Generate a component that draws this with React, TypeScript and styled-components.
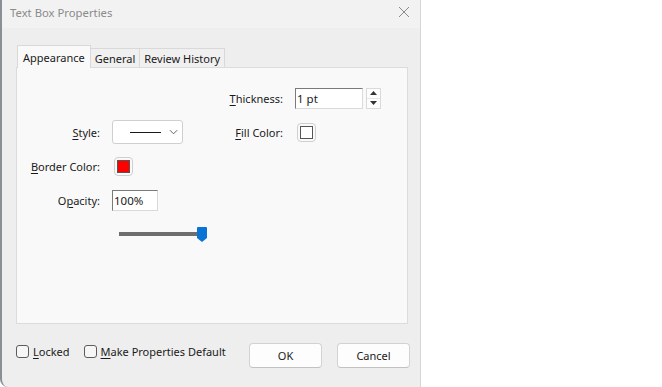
import React from "react";
import styled, { createGlobalStyle } from "styled-components";

const GlobalStyle = createGlobalStyle`
  html, body {
    margin: 0;
    padding: 0;
    background: #ffffff;
  }
  body {
    font-family: "Segoe UI", "Noto Sans", "Open Sans", sans-serif;
    font-size: 11px;
    color: #1a1a1a;
  }
`;

const Window = styled.div`
  width: 421px;
  height: 387px;
  background: #eeeeee;
  border-right: 1px solid #d6d6d6;
  border-left: 2px solid #8a8f96;
  border-bottom-left-radius: 8px;
  box-sizing: border-box;
  display: flex;
  flex-direction: column;
  overflow: hidden;
`;

const TitleBar = styled.div`
  height: 28px;
  background: #f2f2f2;
  display: flex;
  align-items: center;
  justify-content: space-between;
  padding: 0 4px 4px 8px;
  box-sizing: border-box;
  color: #8a8a8a;
  font-size: 11.3px;
`;

const CloseButton = styled.div`
  width: 24px;
  height: 24px;
  display: flex;
  align-items: center;
  justify-content: center;
`;

const Body = styled.div`
  flex: 1;
  display: flex;
  flex-direction: column;
  padding: 17px 12px 0 14px;
`;

const TabRow = styled.div`
  display: flex;
  align-items: flex-end;
  height: 22px;
  margin-left: 1px;
`;

const Tab = styled.div<{ $active?: boolean }>`
  height: ${p => (p.$active ? "23px" : "19px")};
  padding: 0 ${p => (p.$active ? "5px" : "4px")};
  display: flex;
  align-items: center;
  background: ${p => (p.$active ? "#f9f9f9" : "#f0f0f0")};
  border: 1px solid #d9d9d9;
  border-bottom: none;
  margin-left: ${p => (p.$active ? "0" : "-1px")};
  margin-bottom: ${p => (p.$active ? "-1px" : "0")};
  position: relative;
  z-index: ${p => (p.$active ? 2 : 1)};
  box-sizing: border-box;
  color: #1a1a1a;
`;

const Panel = styled.div`
  height: 257px;
  background: #f9f9f9;
  border: 1px solid #dcdcdc;
  box-sizing: border-box;
  padding-top: 13px;
  display: grid;
  grid-template-columns: 83px 71px 88px 1fr;
  grid-auto-rows: 34px;
  column-gap: 12px;
  align-items: center;
`;

const Label = styled.label<{ $col: number }>`
  grid-column: ${p => p.$col};
  text-align: right;
  white-space: nowrap;
  color: #1a1a1a;
`;

const Key = styled.span`
  text-decoration: underline;
  text-underline-offset: 2px;
`;

const Field = styled.div<{ $col: number }>`
  grid-column: ${p => p.$col};
  display: flex;
  align-items: center;
  gap: 3px;
`;

const TextInput = styled.div<{ $w: number }>`
  width: ${p => p.$w}px;
  height: 21px;
  box-sizing: border-box;
  background: #ffffff;
  border: 1px solid #dadada;
  border-top-color: #7a7a7a;
  border-left-color: #7a7a7a;
  padding: 0 1px;
  display: flex;
  align-items: center;
  font-size: 11.5px;
`;

const Spinner = styled.div`
  width: 15px;
  height: 21px;
  display: flex;
  flex-direction: column;
  border: 1px solid #dadada;
  box-sizing: border-box;
  background: #fdfdfd;
`;

const SpinHalf = styled.div`
  flex: 1;
  display: flex;
  align-items: center;
  justify-content: center;
  border-bottom: 1px solid #e6e6e6;
  &:last-child {
    border-bottom: none;
  }
`;

const Select = styled.div`
  width: 71px;
  height: 24px;
  box-sizing: border-box;
  background: #ffffff;
  border: 1px solid #cfcfcf;
  border-radius: 3px;
  display: flex;
  align-items: center;
  padding: 0 4px 0 17px;
  gap: 8px;
`;

const LineSample = styled.div`
  width: 34px;
  height: 1px;
  background: #1a1a1a;
`;

const Swatch = styled.div<{ $fill: string }>`
  width: 19px;
  height: 19px;
  box-sizing: border-box;
  border: 1px solid #cfcfcf;
  border-radius: 4px;
  background: #fafafa;
  display: flex;
  align-items: center;
  justify-content: center;
  margin-left: 2px;
  &::after {
    content: "";
    width: 13px;
    height: 13px;
    box-sizing: border-box;
    border: 1px solid #555;
    background: ${p => p.$fill};
  }
`;

const SliderField = styled.div`
  grid-column: 2 / span 2;
  display: flex;
  align-items: center;
  padding-left: 7px;
`;

const Track = styled.div`
  flex: 0 0 80px;
  height: 4px;
  background: #6e6e6e;
`;

const Thumb = styled.svg`
  display: block;
  flex: 0 0 auto;
  margin-left: -2px;
`;

const Footer = styled.div`
  flex: 1;
  display: flex;
  align-items: flex-start;
  padding-top: 19px;
  margin-right: -2px;
`;

const CheckRow = styled.label`
  display: flex;
  align-items: center;
  gap: 4px;
  margin-right: 14px;
  margin-top: 1px;
  white-space: nowrap;
`;

const Box = styled.span`
  width: 13px;
  height: 13px;
  box-sizing: border-box;
  border: 1px solid #5c5c5c;
  border-radius: 3px;
  background: #f6f6f6;
`;

const Buttons = styled.div`
  margin-left: auto;
  display: flex;
  gap: 15px;
`;

const Button = styled.button`
  width: 73px;
  height: 25px;
  background: #fdfdfd;
  border: 1px solid #d2d2d2;
  border-bottom-color: #c2c2c2;
  border-radius: 4px;
  font: inherit;
  color: #1a1a1a;
  padding: 0;
`;

function App() {
  return (
    <>
      <GlobalStyle />
      <Window>
        <TitleBar>
          <span>Text Box Properties</span>
          <CloseButton>
            <svg width="12" height="12" viewBox="0 0 12 12">
              <path d="M1 1 L11 11 M11 1 L1 11" stroke="#8a8a8a" strokeWidth="1" />
            </svg>
          </CloseButton>
        </TitleBar>
        <Body>
          <TabRow>
            <Tab $active>Appearance</Tab>
            <Tab>General</Tab>
            <Tab>Review History</Tab>
          </TabRow>
          <Panel>
            <Label $col={3}>
              <Key>T</Key>hickness:
            </Label>
            <Field $col={4}>
              <TextInput $w={68}>1 pt</TextInput>
              <Spinner>
                <SpinHalf>
                  <svg width="7" height="4" viewBox="0 0 7 4">
                    <path d="M0 4 L3.5 0 L7 4 Z" fill="#333" />
                  </svg>
                </SpinHalf>
                <SpinHalf>
                  <svg width="7" height="4" viewBox="0 0 7 4">
                    <path d="M0 0 L3.5 4 L7 0 Z" fill="#333" />
                  </svg>
                </SpinHalf>
              </Spinner>
            </Field>

            <Label $col={1}>
              <Key>S</Key>tyle:
            </Label>
            <Field $col={2}>
              <Select>
                <LineSample />
                <svg width="10" height="6" viewBox="0 0 10 6">
                  <path d="M1 1 L5 5 L9 1" stroke="#555" strokeWidth="1" fill="none" />
                </svg>
              </Select>
            </Field>
            <Label $col={3}>
              <Key>F</Key>ill Color:
            </Label>
            <Field $col={4}>
              <Swatch $fill="#ffffff" />
            </Field>

            <Label $col={1}>
              <Key>B</Key>order Color:
            </Label>
            <Field $col={2}>
              <Swatch $fill="#ff0000" />
            </Field>

            <Label $col={1}>
              O<Key>p</Key>acity:
            </Label>
            <Field $col={2}>
              <TextInput $w={46}>100%</TextInput>
            </Field>

            <SliderField>
              <Track />
              <Thumb width="10" height="15" viewBox="0 0 10 15">
                <path d="M1 0 H9 Q10 0 10 1 V11 L5 15 L0 11 V1 Q0 0 1 0 Z" fill="#0a74d6" />
              </Thumb>
            </SliderField>
          </Panel>
          <Footer>
            <CheckRow>
              <Box />
              <span>
                <Key>L</Key>ocked
              </span>
            </CheckRow>
            <CheckRow>
              <Box />
              <span>
                <Key>M</Key>ake Properties Default
              </span>
            </CheckRow>
            <Buttons>
              <Button>OK</Button>
              <Button>Cancel</Button>
            </Buttons>
          </Footer>
        </Body>
      </Window>
    </>
  );
}

export default App;
